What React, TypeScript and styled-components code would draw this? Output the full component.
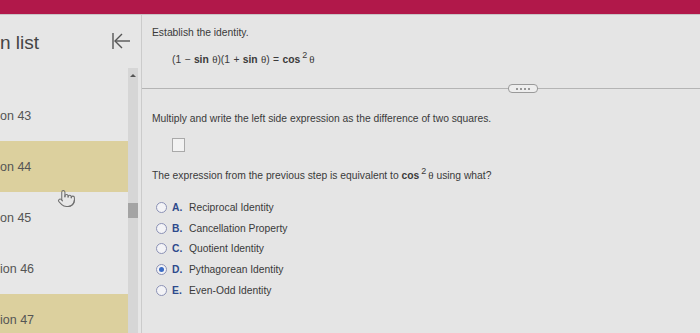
import React from 'react'
import styled, { createGlobalStyle } from 'styled-components'
import { Pointer } from 'lucide-react'

const GlobalStyle = createGlobalStyle`
  html, body {
    margin: 0;
    padding: 0;
    background: #e4e4e4;
    font-family: 'Liberation Sans', Arial, sans-serif;
    color: #3a3a3a;
  }
`

const Page = styled.div`
  width: 700px;
  height: 333px;
  display: flex;
  flex-direction: column;
  overflow: hidden;
`

const TopBar = styled.div`
  height: 14px;
  flex: 0 0 14px;
  background: #b1184a;
  border-bottom: 1px solid #c9c4c6;
`

const Body = styled.div`
  flex: 1;
  display: flex;
  min-height: 0;
`

const Sidebar = styled.aside`
  position: relative;
  width: 141px;
  flex: 0 0 141px;
  display: flex;
  flex-direction: column;
  border-right: 1px solid #cbcbcb;
  background: #e6e6e6;
`

const SideHeader = styled.div`
  height: 53px;
  flex: 0 0 53px;
  display: flex;
  align-items: center;
  justify-content: space-between;
  padding-right: 10px;
  padding-top: 2px;
  box-sizing: border-box;
`

const SideTitle = styled.div`
  font-size: 19px;
  color: #444;
  margin-top: 0;
`

const CollapseButton = styled.div`
  width: 20px;
  height: 20px;
  display: flex;
  align-items: center;
  justify-content: center;
  margin-top: -4px;
`

const ListArea = styled.div`
  flex: 1;
  display: flex;
  min-height: 0;
`

const List = styled.div`
  width: 128px;
  flex: 0 0 128px;
  padding-top: 22px;
  overflow: hidden;
`

const Row = styled.div<{ $flagged?: boolean }>`
  height: 51px;
  display: flex;
  align-items: center;
  font-size: 12.5px;
  color: #555;
  background: ${({ $flagged }) => ($flagged ? '#dcd09e' : '#e7e7e7')};
`

const Scrollbar = styled.div`
  width: 10px;
  flex: 0 0 10px;
  background: #d6d6d6;
  display: flex;
  flex-direction: column;
  align-items: center;
`

const ScrollArrow = styled.div`
  width: 0;
  height: 0;
  margin-top: 6px;
  border-left: 3px solid transparent;
  border-right: 3px solid transparent;
  border-bottom: 3px solid #555;
`

const ScrollThumb = styled.div`
  width: 10px;
  height: 15px;
  margin-top: 126px;
  background: #a4a4a4;
`

const Cursor = styled.div`
  position: absolute;
  left: 57px;
  top: 174px;
  color: #6e6e6e;
`

const Main = styled.main`
  flex: 1;
  display: flex;
  flex-direction: column;
  font-size: 10.3px;
  color: #3a3a3a;
  background: #e5e5e5;
`

const Intro = styled.div`
  height: 69px;
  flex: 0 0 69px;
  padding: 11px 0 0 10px;
  box-sizing: border-box;
`

const Line = styled.div`
  line-height: 14px;
`

const Equation = styled.div`
  margin: 12px 0 0 20px;
  line-height: 14px;
  word-spacing: 0.5px;
`

const Bold = styled.b`
  font-weight: 700;
`

const Theta = styled.span`
  font-family: 'Liberation Serif', 'Times New Roman', serif;
  font-size: 11px;
`

const Sup = styled.sup`
  font-size: 9px;
  vertical-align: 5px;
  line-height: 0;
  margin: 0 2px;
`

const Divider = styled.div`
  display: flex;
  align-items: center;
  height: 9px;
`

const Rule = styled.div<{ $width?: number }>`
  height: 1px;
  background: #b4b4b4;
  flex: ${({ $width }) => ($width ? `0 0 ${$width}px` : '1')};
`

const MorePill = styled.div`
  width: 28px;
  height: 7px;
  border: 1px solid #9a9a9a;
  border-radius: 4px;
  background: #eeeeee;
  display: flex;
  align-items: center;
  justify-content: center;
  gap: 2px;
`

const Dot = styled.span`
  width: 2px;
  height: 2px;
  border-radius: 1px;
  background: #7a7a7a;
`

const Content = styled.div`
  padding: 19px 0 0 10px;
`

const AnswerBox = styled.div`
  width: 11px;
  height: 12px;
  margin: 12px 0 0 20px;
  border: 1px solid #a9a9a9;
  background: #f2f2f2;
`

const Question = styled.div`
  margin-top: 16px;
  line-height: 14px;
`

const Options = styled.div`
  margin-top: 14px;
  display: flex;
  flex-direction: column;
`

const Option = styled.label`
  height: 20.7px;
  display: flex;
  align-items: center;
`

const Radio = styled.span<{ $checked?: boolean }>`
  width: 11px;
  height: 11px;
  box-sizing: border-box;
  margin-left: 4px;
  border-radius: 50%;
  border: 1.5px solid #8c92b6;
  background: #f3f3f6;
  display: flex;
  align-items: center;
  justify-content: center;

  &::after {
    content: '';
    width: 5px;
    height: 5px;
    border-radius: 50%;
    background: ${({ $checked }) => ($checked ? '#3a6bc4' : 'transparent')};
  }
`

const Letter = styled.span`
  width: 17px;
  margin-left: 5px;
  font-weight: 700;
  color: #2e4a8c;
`

const options = [
  { key: 'A', text: 'Reciprocal Identity' },
  { key: 'B', text: 'Cancellation Property' },
  { key: 'C', text: 'Quotient Identity' },
  { key: 'D', text: 'Pythagorean Identity', checked: true },
  { key: 'E', text: 'Even-Odd Identity' },
]

const rows = [
  { label: 'on 43' },
  { label: 'on 44', flagged: true },
  { label: 'on 45' },
  { label: 'ion 46' },
  { label: 'ion 47', flagged: true },
]

function CollapseIcon() {
  return (
    <svg width="20" height="20" viewBox="0 0 20 20" fill="none" stroke="#555" strokeWidth="1.4">
      <line x1="2" y1="2" x2="2" y2="18" />
      <line x1="4" y1="10" x2="19" y2="10" />
      <polyline points="11,3 4,10 11,17" />
    </svg>
  )
}

export default function App() {
  return (
    <>
      <GlobalStyle />
      <Page>
        <TopBar />
        <Body>
          <Sidebar>
            <SideHeader>
              <SideTitle>n list</SideTitle>
              <CollapseButton>
                <CollapseIcon />
              </CollapseButton>
            </SideHeader>
            <ListArea>
              <List>
                {rows.map((r) => (
                  <Row key={r.label} $flagged={r.flagged}>
                    {r.label}
                  </Row>
                ))}
              </List>
              <Scrollbar>
                <ScrollArrow />
                <ScrollThumb />
              </Scrollbar>
            </ListArea>
            <Cursor>
              <Pointer size={19} strokeWidth={1.3} />
            </Cursor>
          </Sidebar>
          <Main>
            <Intro>
              <Line>Establish the identity.</Line>
              <Equation>
                (1 − <Bold>sin</Bold> <Theta>θ</Theta>)(1 + <Bold>sin</Bold> <Theta>θ</Theta>) = <Bold>cos</Bold>
                <Sup>2</Sup>
                <Theta>θ</Theta>
              </Equation>
            </Intro>
            <Divider>
              <Rule $width={366} />
              <MorePill>
                <Dot />
                <Dot />
                <Dot />
                <Dot />
              </MorePill>
              <Rule />
            </Divider>
            <Content>
              <Line>Multiply and write the left side expression as the difference of two squares.</Line>
              <AnswerBox />
              <Question>
                The expression from the previous step is equivalent to <Bold>cos</Bold>
                <Sup>2</Sup>
                <Theta>θ</Theta> using what?
              </Question>
              <Options>
                {options.map((o) => (
                  <Option key={o.key}>
                    <Radio $checked={o.checked} />
                    <Letter>{o.key}.</Letter>
                    {o.text}
                  </Option>
                ))}
              </Options>
            </Content>
          </Main>
        </Body>
      </Page>
    </>
  )
}
